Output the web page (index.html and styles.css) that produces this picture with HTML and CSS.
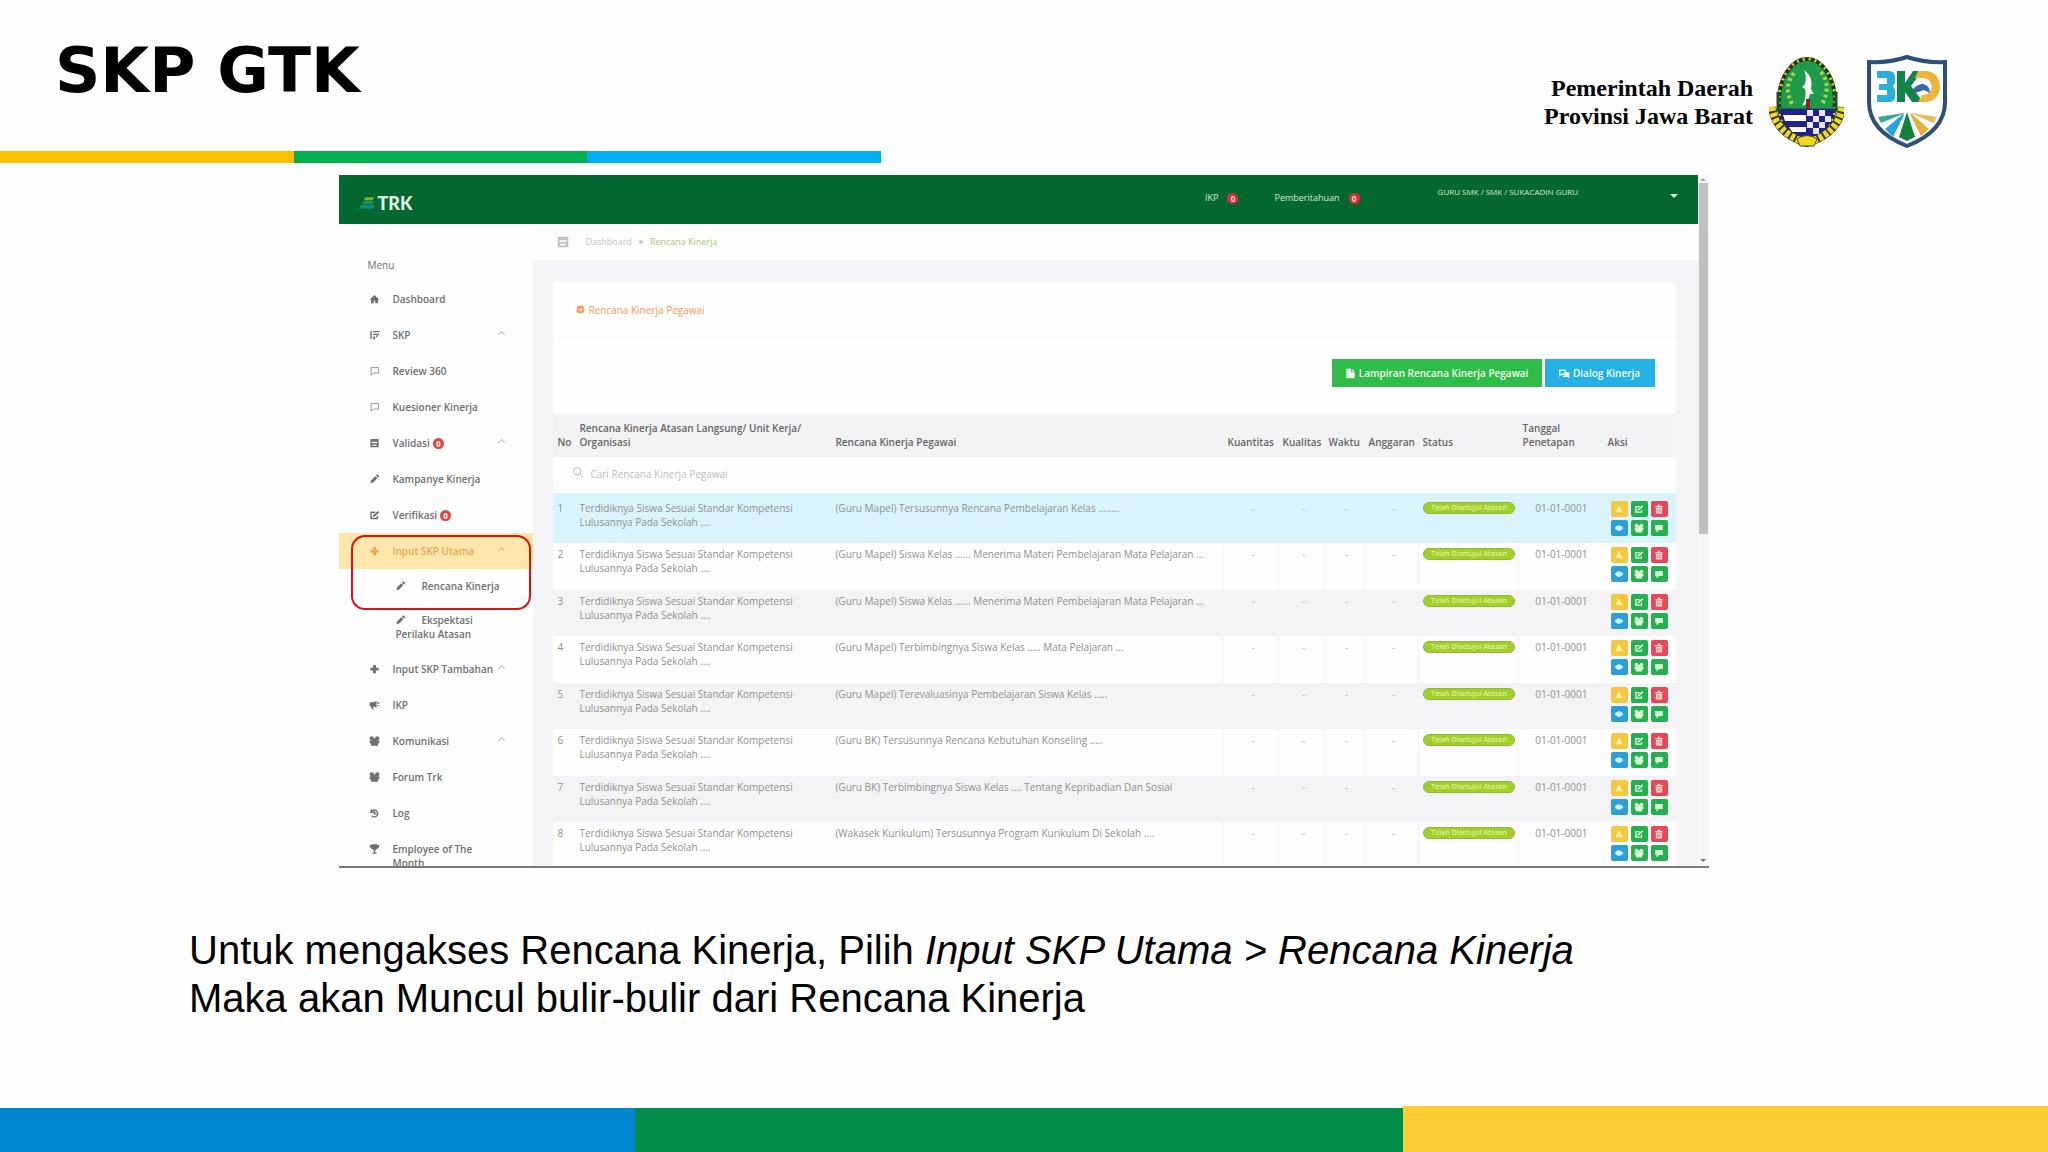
FILE: index.html
```html
<!DOCTYPE html>
<html lang="id">
<head>
	<meta charset="UTF-8">
	<title>SKP GTK</title>

	<link rel="stylesheet" href="styles.css">
</head>
<body>
<svg class="symbols" width="0" height="0" aria-hidden="true">
	<symbol id="home" viewBox="0 0 16 16"><path d="M8 2 1 9h2v5h4v-4h2v4h4V9h2z"/></symbol>
	<symbol id="list" viewBox="0 0 16 16"><path d="M2 2h2v12H2zM6 2h9v2H6zM6 6h6v2H6zM6 10h3v4H6zM10 10l4-5 1 1-4 6z"/></symbol>
	<symbol id="chat" viewBox="0 0 16 16"><path d="M3 3h11v8H7l-4 3z" fill="none" stroke="currentColor" stroke-width="1"/></symbol>
	<symbol id="check" viewBox="0 0 16 16"><path fill-rule="evenodd" d="M2 2h12v12H2zM4 6v2h8V6zM5 10v2h6v-2z"/></symbol>
	<symbol id="pencil" viewBox="0 0 16 16"><path d="m2 14 1-4 6-6 3 3-6 6zM10 3l2-2 3 3-2 2z"/></symbol>
	<symbol id="edit" viewBox="0 0 16 16"><path d="M12 9v4H3V4h6" fill="none" stroke="currentColor" stroke-width="2"/><path d="m6 8 7-6 2 2-7 6-3 1z"/></symbol>
	<symbol id="plus" viewBox="0 0 16 16"><path d="M6 2h4v4h4v4h-4v4H6v-4H2V6h4z"/></symbol>
	<symbol id="horn" viewBox="0 0 16 16"><path d="M1 4h5l5-2v10L7 10H6l1 4H4L3 10H1zM12 4h3v2h-3zM12 8h3v1h-3z"/></symbol>
	<symbol id="group" viewBox="0 0 16 16"><circle cx="4" cy="4" r="3"/><circle cx="12" cy="4" r="3"/><circle cx="8" cy="7" r="3"/><path d="M1 7h14v4l-2 1v3H3v-3l-2-1z"/></symbol>
	<symbol id="history" viewBox="0 0 16 16"><path d="M3 3v4h4M3 7a5 5 0 1 1 1 5M8 5v4h3" fill="none" stroke="currentColor" stroke-width="2"/></symbol>
	<symbol id="trophy" viewBox="0 0 16 16"><path d="M4 1h8v1h3c0 4-2 6-4 6L9 10v3h2v2H5v-2h2v-3L5 8C3 8 1 6 1 2h3z"/></symbol>
	<symbol id="search" viewBox="0 0 16 16"><path d="M12 7A5 5 0 1 1 2 7a5 5 0 0 1 10 0zM11 11l4 4" fill="none" stroke="currentColor" stroke-width="1"/></symbol>
	<symbol id="file" viewBox="0 0 16 16"><path d="M2 1h7v5h5v9H2zM10 1l4 4h-4z"/></symbol>
	<symbol id="chats" viewBox="0 0 16 16"><path d="M1 3h8v6H4l-3 2z" fill="none" stroke="currentColor" stroke-width="2"/><path d="M10 6h5v9l-3-2H6v-2h4z"/></symbol>
	<symbol id="warn" viewBox="0 0 16 16"><path d="m8 2 6 11H2z"/></symbol>
	<symbol id="trash" viewBox="0 0 16 16"><path fill-rule="evenodd" d="M6 1h4v2h4v2H2V3h4zM3 6h10v9H3zM6 8v5h1V8zM9 8v5h1V8z"/></symbol>
	<symbol id="eye" viewBox="0 0 16 16"><path d="M1 8c4-6 10-6 14 0-4 6-10 6-14 0z"/></symbol>
	<symbol id="talk" viewBox="0 0 16 16"><path d="M2 3h12v8H8l-4 4v-4H2z"/></symbol>
	<symbol id="arrow" viewBox="0 0 16 16"><path fill-rule="evenodd" d="M8 1a7 7 0 1 1 0 14A7 7 0 0 1 8 1zM8 4v3H4v2h4v3l4-4z"/></symbol>
</svg>

<header class="top">
	<h1>SKP GTK</h1>
	<div class="brand">
		<p>Pemerintah Daerah<br>Provinsi Jawa Barat</p>
		<svg class="crest" viewBox="0 0 75 90" role="img" aria-label="Jawa Barat">
			<ellipse cx="38" cy="44" rx="29" ry="42" fill="#1f9a48"/>
			<ellipse cx="38" cy="44" rx="28" ry="42" fill="none" stroke="#1d3a17" stroke-width="4"/>
			<ellipse cx="38" cy="44" rx="28" ry="42" fill="none" stroke="#d8cf35" stroke-width="3" stroke-dasharray="2 4"/>
			<path d="M9 35v18h58V35" fill="none" stroke="#17502b" stroke-width="3"/>
			<path d="M25 16q-11 13-2 31M52 15q11 14 1 32" fill="none" stroke="#a6d64b" stroke-width="4" stroke-dasharray="3 3"/>
			<path d="M35 13q10 7 7 19l3 5h-4l-3 10-5 2q5-8 3-17l-3-2 3-3q2-8-1-14z" fill="#f5fff5"/>
			<path d="M37 42h4v11h-4z" fill="#7c2626"/>
			<path d="M11 52h54q-2 22-27 34Q13 76 11 52z" fill="#20208e"/>
			<path d="M14 58h23v6H16zM20 70h17v5H23z" fill="#fff"/>
			<path d="M38 53h6v6h-6zM50 53h6v6h-6zM44 59h6v6h-6zM56 59h6v6h-6zM38 65h6v6h-6zM50 65h6v6h-6zM44 71h6v6h-6z" fill="#e6e8fa"/>
			<path d="M3 50q3 26 35 36 32-10 35-36" fill="none" stroke="#3b3515" stroke-width="8"/>
			<path d="M3 50q3 26 35 36 32-10 35-36" fill="none" stroke="#f1dc25" stroke-width="7" stroke-dasharray="4 2"/>
			<path d="M28 82q10-7 20 0l-3 7H31z" fill="#f0d820" stroke="#514816" stroke-width="1"/>
		</svg>
		<svg class="bkd" viewBox="0 0 82 96" role="img" aria-label="BKD">
			<path d="M3 8q20 1 38-5 18 6 38 5v40c0 21-15 35-38 44C18 83 3 69 3 48z" fill="#fff" stroke="#2c5079" stroke-width="4"/>
			<path d="M11 17h12q6 0 6 6v6l-2 3 2 4v6q0 6-6 6H11v-7h10v-5h-8v-6h8v-6H11z" fill="#2aaede"/>
			<path d="M31 17h8v12l8-12h9L45 32l12 16H46l-7-10v10h-8z" fill="#13844b"/>
			<path d="M52 17h7c20 0 20 31 0 31h-7l4-7c13 0 13-17 0-17h-7z" fill="#efb539"/>
			<path d="M46 36q10-11 17-2l1 5-6-3-9 3z" fill="#3369a3"/>
			<path d="m38 59-26 4 3 6 22-9z" fill="#37aa91"/>
			<path d="M37 60 19 75l8 8 11-22z" fill="#27a5d7"/>
			<path d="m41 58-8 25 8 4 8-4z" fill="#15803e"/>
			<path d="m44 60 11 22 8-7-17-15z" fill="#e9af3e"/>
			<path d="m45 59 22 10 4-6-25-4z" fill="#e8ba5a"/>
		</svg>
	</div>
</header>
<div class="stripe"><span></span><span></span><span></span></div>

<main>
	<section class="app">
		<div class="view">
			<div class="navbar">
				<a class="logo" href="#">
					<svg viewBox="0 0 18 16" aria-hidden="true"><path d="M7 2h9l-2 3H5z" fill="#7cb82f"/><path d="M5 6h11l-2 3H3z" fill="#16964b"/><path d="M2 10h14v4H0z" fill="#058c86"/></svg>TRK
				</a>
				<nav>
					<a href="#">IKP <b class="badge">0</b></a>
					<a href="#">Pemberitahuan <b class="badge">0</b></a>
				</nav>
				<button class="user" type="button">GURU SMK / SMK / SUKACADIN GURU <i></i></button>
			</div>
			<div class="body">
				<aside>
					<h2>Menu</h2>
					<ul class="menu">
						<li><a href="#"><svg><use href="#home"/></svg>Dashboard</a></li>
						<li><a class="more" href="#"><svg><use href="#list"/></svg>SKP</a></li>
						<li><a href="#"><svg><use href="#chat"/></svg>Review 360</a></li>
						<li><a href="#"><svg><use href="#chat"/></svg>Kuesioner Kinerja</a></li>
						<li><a class="more" href="#"><svg><use href="#check"/></svg>Validasi <b class="badge">0</b></a></li>
						<li><a href="#"><svg><use href="#pencil"/></svg>Kampanye Kinerja</a></li>
						<li><a href="#"><svg><use href="#edit"/></svg>Verifikasi <b class="badge">0</b></a></li>
						<li class="open">
							<a class="more active" href="#"><svg><use href="#plus"/></svg>Input SKP Utama</a>
							<ul>
								<li><a href="#"><svg><use href="#pencil"/></svg>Rencana Kinerja</a></li>
								<li><a href="#"><svg><use href="#pencil"/></svg>Ekspektasi<br>Perilaku Atasan</a></li>
							</ul>
							<div class="mark"></div>
						</li>
						<li><a class="more" href="#"><svg><use href="#plus"/></svg>Input SKP Tambahan</a></li>
						<li><a href="#"><svg><use href="#horn"/></svg>IKP</a></li>
						<li><a class="more" href="#"><svg><use href="#group"/></svg>Komunikasi</a></li>
						<li><a href="#"><svg><use href="#group"/></svg>Forum Trk</a></li>
						<li><a href="#"><svg><use href="#history"/></svg>Log</a></li>
						<li><a href="#"><svg><use href="#trophy"/></svg><span>Employee of The<br>Month</span></a></li>
					</ul>
				</aside>
				<div class="content">
					<div class="crumbs">
						<svg><use href="#check"/></svg>
						<a href="#">Dashboard</a>
						<i></i>
						<span>Rencana Kinerja</span>
					</div>
					<div class="card">
						<h3><svg><use href="#arrow"/></svg>Rencana Kinerja Pegawai</h3>
						<div class="tools">
							<button class="green" type="button"><svg><use href="#file"/></svg>Lampiran Rencana Kinerja Pegawai</button>
							<button class="blue" type="button"><svg><use href="#chats"/></svg>Dialog Kinerja</button>
						</div>
						<table>
							<colgroup>
								<col class="c-no"><col class="c-atasan"><col><col class="c-kuantitas"><col class="c-kualitas"><col class="c-waktu"><col class="c-anggaran"><col class="c-status"><col class="c-tanggal"><col class="c-aksi">
							</colgroup>
							<thead>
								<tr>
									<th>No</th>
									<th>Rencana Kinerja Atasan Langsung/ Unit Kerja/<br>Organisasi</th>
									<th>Rencana Kinerja Pegawai</th>
									<th>Kuantitas</th>
									<th>Kualitas</th>
									<th>Waktu</th>
									<th>Anggaran</th>
									<th>Status</th>
									<th>Tanggal<br>Penetapan</th>
									<th>Aksi</th>
								</tr>
								<tr class="find">
									<td colspan="10"><label><svg><use href="#search"/></svg><input type="text" placeholder="Cari Rencana Kinerja Pegawai" aria-label="Cari Rencana Kinerja Pegawai"></label></td>
								</tr>
							</thead>
							<tbody>
								<tr class="selected">
									<td>1</td>
									<td>Terdidiknya Siswa Sesuai Standar Kompetensi<br>Lulusannya Pada Sekolah ....</td>
									<td>(Guru Mapel) Tersusunnya Rencana Pembelajaran Kelas ........</td>
									<td>-</td><td>-</td><td>-</td><td>-</td>
									<td><span class="pill">Telah Disetujui Atasan</span></td>
									<td>01-01-0001</td>
									<td><div class="acts"><button aria-label="Peringatan"><svg><use href="#warn"/></svg></button><button aria-label="Ubah"><svg><use href="#edit"/></svg></button><button aria-label="Hapus"><svg><use href="#trash"/></svg></button><button aria-label="Lihat"><svg><use href="#eye"/></svg></button><button aria-label="Tim"><svg><use href="#group"/></svg></button><button aria-label="Pesan"><svg><use href="#talk"/></svg></button></div></td>
								</tr>
								<tr>
									<td>2</td>
									<td>Terdidiknya Siswa Sesuai Standar Kompetensi<br>Lulusannya Pada Sekolah ....</td>
									<td>(Guru Mapel) Siswa Kelas ...... Menerima Materi Pembelajaran Mata Pelajaran ...</td>
									<td>-</td><td>-</td><td>-</td><td>-</td>
									<td><span class="pill">Telah Disetujui Atasan</span></td>
									<td>01-01-0001</td>
									<td><div class="acts"><button aria-label="Peringatan"><svg><use href="#warn"/></svg></button><button aria-label="Ubah"><svg><use href="#edit"/></svg></button><button aria-label="Hapus"><svg><use href="#trash"/></svg></button><button aria-label="Lihat"><svg><use href="#eye"/></svg></button><button aria-label="Tim"><svg><use href="#group"/></svg></button><button aria-label="Pesan"><svg><use href="#talk"/></svg></button></div></td>
								</tr>
								<tr>
									<td>3</td>
									<td>Terdidiknya Siswa Sesuai Standar Kompetensi<br>Lulusannya Pada Sekolah ....</td>
									<td>(Guru Mapel) Siswa Kelas ...... Menerima Materi Pembelajaran Mata Pelajaran ...</td>
									<td>-</td><td>-</td><td>-</td><td>-</td>
									<td><span class="pill">Telah Disetujui Atasan</span></td>
									<td>01-01-0001</td>
									<td><div class="acts"><button aria-label="Peringatan"><svg><use href="#warn"/></svg></button><button aria-label="Ubah"><svg><use href="#edit"/></svg></button><button aria-label="Hapus"><svg><use href="#trash"/></svg></button><button aria-label="Lihat"><svg><use href="#eye"/></svg></button><button aria-label="Tim"><svg><use href="#group"/></svg></button><button aria-label="Pesan"><svg><use href="#talk"/></svg></button></div></td>
								</tr>
								<tr>
									<td>4</td>
									<td>Terdidiknya Siswa Sesuai Standar Kompetensi<br>Lulusannya Pada Sekolah ....</td>
									<td>(Guru Mapel) Terbimbingnya Siswa Kelas ..... Mata Pelajaran ...</td>
									<td>-</td><td>-</td><td>-</td><td>-</td>
									<td><span class="pill">Telah Disetujui Atasan</span></td>
									<td>01-01-0001</td>
									<td><div class="acts"><button aria-label="Peringatan"><svg><use href="#warn"/></svg></button><button aria-label="Ubah"><svg><use href="#edit"/></svg></button><button aria-label="Hapus"><svg><use href="#trash"/></svg></button><button aria-label="Lihat"><svg><use href="#eye"/></svg></button><button aria-label="Tim"><svg><use href="#group"/></svg></button><button aria-label="Pesan"><svg><use href="#talk"/></svg></button></div></td>
								</tr>
								<tr>
									<td>5</td>
									<td>Terdidiknya Siswa Sesuai Standar Kompetensi<br>Lulusannya Pada Sekolah ....</td>
									<td>(Guru Mapel) Terevaluasinya Pembelajaran Siswa Kelas .....</td>
									<td>-</td><td>-</td><td>-</td><td>-</td>
									<td><span class="pill">Telah Disetujui Atasan</span></td>
									<td>01-01-0001</td>
									<td><div class="acts"><button aria-label="Peringatan"><svg><use href="#warn"/></svg></button><button aria-label="Ubah"><svg><use href="#edit"/></svg></button><button aria-label="Hapus"><svg><use href="#trash"/></svg></button><button aria-label="Lihat"><svg><use href="#eye"/></svg></button><button aria-label="Tim"><svg><use href="#group"/></svg></button><button aria-label="Pesan"><svg><use href="#talk"/></svg></button></div></td>
								</tr>
								<tr>
									<td>6</td>
									<td>Terdidiknya Siswa Sesuai Standar Kompetensi<br>Lulusannya Pada Sekolah ....</td>
									<td>(Guru BK) Tersusunnya Rencana Kebutuhan Konseling .....</td>
									<td>-</td><td>-</td><td>-</td><td>-</td>
									<td><span class="pill">Telah Disetujui Atasan</span></td>
									<td>01-01-0001</td>
									<td><div class="acts"><button aria-label="Peringatan"><svg><use href="#warn"/></svg></button><button aria-label="Ubah"><svg><use href="#edit"/></svg></button><button aria-label="Hapus"><svg><use href="#trash"/></svg></button><button aria-label="Lihat"><svg><use href="#eye"/></svg></button><button aria-label="Tim"><svg><use href="#group"/></svg></button><button aria-label="Pesan"><svg><use href="#talk"/></svg></button></div></td>
								</tr>
								<tr>
									<td>7</td>
									<td>Terdidiknya Siswa Sesuai Standar Kompetensi<br>Lulusannya Pada Sekolah ....</td>
									<td>(Guru BK) Terbimbingnya Siswa Kelas .... Tentang Kepribadian Dan Sosial</td>
									<td>-</td><td>-</td><td>-</td><td>-</td>
									<td><span class="pill">Telah Disetujui Atasan</span></td>
									<td>01-01-0001</td>
									<td><div class="acts"><button aria-label="Peringatan"><svg><use href="#warn"/></svg></button><button aria-label="Ubah"><svg><use href="#edit"/></svg></button><button aria-label="Hapus"><svg><use href="#trash"/></svg></button><button aria-label="Lihat"><svg><use href="#eye"/></svg></button><button aria-label="Tim"><svg><use href="#group"/></svg></button><button aria-label="Pesan"><svg><use href="#talk"/></svg></button></div></td>
								</tr>
								<tr>
									<td>8</td>
									<td>Terdidiknya Siswa Sesuai Standar Kompetensi<br>Lulusannya Pada Sekolah ....</td>
									<td>(Wakasek Kurikulum) Tersusunnya Program Kurikulum Di Sekolah ....</td>
									<td>-</td><td>-</td><td>-</td><td>-</td>
									<td><span class="pill">Telah Disetujui Atasan</span></td>
									<td>01-01-0001</td>
									<td><div class="acts"><button aria-label="Peringatan"><svg><use href="#warn"/></svg></button><button aria-label="Ubah"><svg><use href="#edit"/></svg></button><button aria-label="Hapus"><svg><use href="#trash"/></svg></button><button aria-label="Lihat"><svg><use href="#eye"/></svg></button><button aria-label="Tim"><svg><use href="#group"/></svg></button><button aria-label="Pesan"><svg><use href="#talk"/></svg></button></div></td>
								</tr>
							</tbody>
						</table>
					</div>
				</div>
			</div>
		</div>
		<div class="scroll"><i class="up"></i><span></span><i class="down"></i></div>
	</section>
	<p class="caption">Untuk mengakses Rencana Kinerja, Pilih <em>Input SKP Utama &gt; Rencana Kinerja</em><br>Maka akan Muncul bulir-bulir dari Rencana Kinerja</p>
</main>

<footer><span></span><span></span><span></span></footer>
</body>
</html>
```

FILE: styles.css
```css
*{
    margin: 0;
    padding: 0;
    box-sizing: border-box;
}

body{
    min-height: 100vh;
    display: flex;
    flex-direction: column;
    background: #fefefe;
    font-family: "Open Sans", "Noto Sans", sans-serif;
}

ul{
    list-style: none;
}

a{
    color: inherit;
    text-decoration: none;
}

button{
    border: 0;
    font-family: inherit;
    cursor: pointer;
}

svg{
    fill: currentColor;
}

.symbols{
    position: absolute;
}

/* slide header */
.top{
    display: flex;
    justify-content: space-between;
    padding: 31px 100px 0 55px;
    height: 151px;
}

h1{
    font-family: "DejaVu Sans", sans-serif;
    font-weight: bold;
    font-size: 63px;
    line-height: 80px;
}

.brand{
    display: flex;
    align-items: center;
    gap: 16px;
    height: 142px;
    margin-top: -31px;
    padding-top: 62px;
}

.brand p{
    font-family: "Liberation Serif", serif;
    font-weight: bold;
    font-size: 24px;
    line-height: 28px;
    text-align: right;
}

.crest{
    width: 75px;
    height: 90px;
}

.bkd{
    width: 82px;
    height: 96px;
    margin-left: 6px;
}

.stripe{
    display: flex;
    width: 43%;
    height: 12px;
}

.stripe span{
    flex: 1;
    background: #ffc000;
}

.stripe span:nth-child(2){
    background: #00b050;
}

.stripe span:nth-child(3){
    background: #00b0f0;
}

main{
    flex: 1;
}

/* application window */
.app{
    display: flex;
    width: calc(67% - 3px);
    aspect-ratio: 1369 / 693;
    margin: 12px auto 0;
    overflow: hidden;
    border-bottom: 2px solid #7d787d;
    background: #f5f4f6;
    font-size: 10px;
    line-height: 14px;
    color: #6f6f6f;
}

.view{
    flex: 1;
}

.navbar{
    display: flex;
    align-items: center;
    height: 49px;
    padding: 0 20px;
    background: #03672f;
    color: #d5ead9;
}

.logo{
    display: flex;
    align-items: center;
    gap: 1px;
    margin-right: auto;
    padding-top: 6px;
    font-family: Lato, sans-serif;
    font-size: 18px;
    font-weight: 900;
    color: #e2f5e6;
}

.logo svg{
    width: 17px;
    height: 16px;
}

.navbar nav{
    display: flex;
    gap: 36px;
    padding-bottom: 3px;
    font-size: 9px;
}

.navbar nav a{
    display: flex;
    align-items: center;
    gap: 9px;
}

.badge{
    display: inline-block;
    width: 11px;
    height: 11px;
    border-radius: 50%;
    background: #d92f3a;
    color: #ffd9d9;
    font-size: 8px;
    line-height: 11px;
    text-align: center;
}

.user{
    display: flex;
    justify-content: space-between;
    width: 240px;
    margin-left: 78px;
    padding-bottom: 16px;
    background: none;
    color: #d5ead9;
    font-size: 8px;
}

.user i{
    margin-top: 8px;
    border: 4px solid transparent;
    border-top-color: #e2f5e6;
    border-bottom: 0;
}

.body{
    display: flex;
}

/* side menu */
aside{
    width: 194px;
    background: #fefefe;
}

aside h2{
    padding: 34px 28px 9px;
    font-size: 10px;
    line-height: 14px;
    font-weight: 400;
}

.menu a{
    position: relative;
    display: flex;
    gap: 12px;
    padding: 11px 30px;
    font-weight: 600;
}

.menu svg{
    width: 11px;
    height: 14px;
}

.menu .badge{
    margin: 2px 0 0 -9px;
    background: #d9483f;
}

.menu .more::after{
    content: "";
    position: absolute;
    top: 15px;
    right: 29px;
    width: 4px;
    height: 4px;
    border: solid #bbb;
    border-width: 1px 0 0 1px;
    transform: rotate(45deg);
}

.menu .active{
    background: #ffe7ac;
    color: #eda356;
}

.menu ul a{
    display: block;
    padding: 10px 0 10px 56px;
}

.menu ul svg{
    float: left;
    margin-right: 15px;
}

.menu ul br{
    clear: left;
}

.open{
    position: relative;
}

/* red outline around the opened menu entry */
.mark{
    position: absolute;
    top: 2px;
    left: 12px;
    width: 180px;
    height: 75px;
    border: 2px solid #e01010;
    border-radius: 14px;
}

/* page content */
.content{
    flex: 1;
    padding-right: 22px;
}

.crumbs{
    display: flex;
    align-items: center;
    gap: 7px;
    height: 36px;
    margin-right: -22px;
    padding-left: 23px;
    background: #fffefd;
    font-size: 9px;
    color: #c3c3c3;
}

.crumbs svg{
    width: 14px;
    height: 14px;
    margin-right: 8px;
}

.crumbs i{
    width: 4px;
    height: 4px;
    border-radius: 50%;
    background: #ccc;
}

.crumbs span{
    color: #a6c97c;
}

.card{
    margin: 22px 0 0 20px;
    background: #fefefe;
}

h3{
    display: flex;
    align-items: center;
    gap: 3px;
    height: 56px;
    padding-left: 23px;
    border-bottom: 1px solid #faf9fa;
    font-size: 10px;
    font-weight: 400;
    color: #f79a58;
}

h3 svg{
    width: 9px;
    height: 9px;
}

.tools{
    display: flex;
    justify-content: flex-end;
    gap: 3px;
    padding: 21px 21px 27px;
}

.tools button{
    display: flex;
    align-items: center;
    justify-content: center;
    gap: 3px;
    height: 28px;
    width: 210px;
    background: #2fbc49;
    color: #f3fff3;
    font-size: 10px;
    font-weight: 600;
}

.tools .blue{
    width: 110px;
    background: #25b0e6;
}

.tools svg{
    width: 11px;
    height: 11px;
}

/* plan table */
table{
    width: 100%;
    table-layout: fixed;
    border-collapse: collapse;
}

.c-no{
    width: 22px;
}

.c-atasan{
    width: 256px;
}

.c-kuantitas{
    width: 55px;
}

.c-kualitas{
    width: 46px;
}

.c-waktu{
    width: 40px;
}

.c-anggaran{
    width: 54px;
}

.c-status{
    width: 100px;
}

.c-tanggal{
    width: 85px;
}

.c-aksi{
    width: 72px;
}

th{
    height: 43px;
    padding: 0 0 8px 4px;
    background: #f3f2f4;
    vertical-align: bottom;
    text-align: left;
    font-weight: 600;
    white-space: nowrap;
    color: #666;
}

td{
    height: 46px;
    padding: 4px 0 0 4px;
    vertical-align: top;
    white-space: nowrap;
    color: #909090;
}

tbody tr:nth-child(even) td{
    height: 47px;
}

tbody tr:nth-child(odd){
    background: #f4f3f5;
}

tbody tr.selected{
    background: #daf4fe;
}

tbody .selected td{
    height: 50px;
    padding-top: 8px;
}

tbody td:nth-child(n+4):nth-child(-n+9){
    border-left: 1px solid #f5f4f5;
}

tbody td:nth-child(n+4):nth-child(-n+7){
    color: #bbb;
    text-align: center;
}

tbody .selected td:nth-child(n){
    border-color: #daf4fe;
}

td:nth-child(9){
    padding-left: 0;
    text-align: center;
}

.find td{
    height: 36px;
    padding: 8px 0 0 19px;
}

.find label{
    display: flex;
    gap: 6px;
    color: #aaa;
}

.find svg{
    width: 12px;
    height: 14px;
}

.find input{
    width: 300px;
    border: 0;
    outline: 0;
    background: none;
    font: inherit;
    line-height: 18px;
}

.find input::placeholder{
    color: #bdbdbd;
}

.pill{
    display: block;
    width: 92px;
    height: 12px;
    margin-top: 1px;
    border: 1px solid #8fba35;
    border-radius: 6px;
    background: #a3cf2c;
    color: #dcf59a;
    font-size: 7px;
    font-weight: 600;
    line-height: 10px;
    text-align: center;
}

.acts{
    display: grid;
    grid-template-columns: repeat(3, 17px);
    gap: 3px;
    padding-left: 3px;
}

.acts button{
    display: flex;
    align-items: center;
    justify-content: center;
    height: 16px;
    border-radius: 2px;
    background: #26ae50;
    color: #d9ffd9;
}

.acts button:nth-child(1){
    background: #f5c842;
    color: #fff1a0;
}

.acts button:nth-child(3){
    background: #e84855;
    color: #ffd6d6;
}

.acts button:nth-child(4){
    background: #2a9fd8;
    color: #c8f0ff;
}

.acts svg{
    width: 10px;
    height: 10px;
}

/* window scrollbar */
.scroll{
    display: flex;
    flex-direction: column;
    align-items: center;
    width: 11px;
    background: #f7f6f8;
}

.scroll span{
    width: 9px;
    height: 351px;
    background: #c1bfc2;
}

.scroll i{
    margin: 3px 0 2px;
    border: 3px solid transparent;
}

.scroll .up{
    border-top: 0;
    border-bottom-color: #aaa;
}

.scroll .down{
    margin: auto 0 4px;
    border-bottom: 0;
    border-top-color: #777;
}

.caption{
    padding: 58px 189px 0;
    font-family: "Liberation Sans", sans-serif;
    font-size: 40px;
    line-height: 48px;
}

footer{
    display: flex;
    align-items: flex-end;
}

footer span{
    height: 44px;
    width: 31%;
    background: #0087d1;
}

footer span:nth-child(2){
    flex: 1;
    background: #008d4c;
}

footer span:nth-child(3){
    width: 645px;
    height: 46px;
    background: #ffcb35;
}
```
